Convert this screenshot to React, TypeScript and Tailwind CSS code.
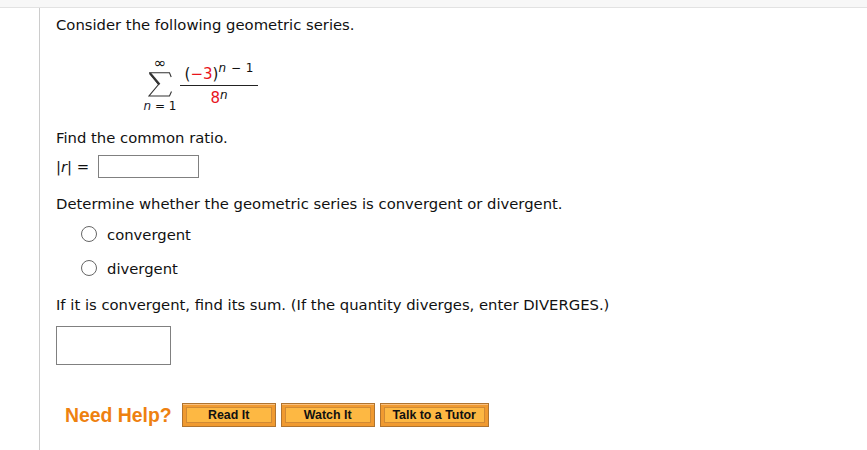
const text = "font-['DejaVu_Sans',Verdana,sans-serif] text-[14.8px] leading-[18px] text-[#111]"

function HelpButton({ label, width }: { label: string; width: string }) {
  return (
    <button className={`${width} h-6 border border-[#b0742f] bg-[#f09a30] p-[3px] shadow-[inset_0_1px_0_#f8c080]`}>
      <span className="flex h-full items-center justify-center border border-[#d08a35] bg-[#fdb843] font-['Liberation_Sans',Arial,sans-serif] text-[12.4px] font-bold text-[#111]">
        {label}
      </span>
    </button>
  )
}

function RadioRow({ label }: { label: string }) {
  return (
    <div className="flex h-[34px] items-center pl-[25px]">
      <span className="mb-[2px] h-4 w-4 rounded-full border border-[#666] bg-white" />
      <span className="ml-[10px]">{label}</span>
    </div>
  )
}

export default function App() {
  return (
    <div className="h-[450px] w-[867px] overflow-hidden bg-white">
      <div className="h-2 border-b border-[#e2e2e2] bg-[#f7f7f7]" />
      <div className="flex h-[442px]">
        <div className="w-10 shrink-0 border-r border-[#ccc]" />
        <div className={`flex-1 pl-4 ${text}`}>
          <p className="mt-2">Consider the following geometric series.</p>

          <div className="mt-[26px] ml-[88px] flex h-[66px] items-start">
            <div className="flex w-[32px] flex-col items-center text-[12px] leading-[12px]">
              <span className="h-[9px] text-[15px] leading-[6px]">∞</span>
              <svg width="24" height="25" viewBox="0 0 24 25" className="mt-[3px]" fill="none">
                <path d="M1 .8H21.5L23.2 5M1.5 1L10.5 12.5L1 24H21.5L23.5 19.5" stroke="#333" strokeWidth="1.1" />
                <path d="M2 1.2L11.5 12.5" stroke="#333" strokeWidth="2.2" />
              </svg>
              <span className="mt-[3px] whitespace-nowrap">
                <i className="text-[#223]">n</i> = 1
              </span>
            </div>
            <div className="ml-[4px] mt-[3px] flex w-[78px] flex-col items-center">
              <div className="flex h-[22px] items-center text-[15px] leading-[16px] whitespace-nowrap">
                <span>(</span>
                <span className="text-[#e8141c]">−3</span>
                <span>)</span>
                <span className="relative -top-[6px] text-[12px] [word-spacing:1px]">
                  <i>n</i> − 1
                </span>
              </div>
              <div className="h-px w-full bg-[#222]" />
              <div className="mt-[4px] flex text-[15px] leading-[16px]">
                <span className="text-[#e8141c]">8</span>
                <i className="relative -top-[3px] text-[12px]">n</i>
              </div>
            </div>
          </div>

          <p className="mt-[3px]">Find the common ratio.</p>

          <div className="mt-[8px] flex items-center">
            <span>
              |<i>r</i>| =
            </span>
            <span className="ml-[9px] h-[23px] w-[101px] border border-[#808080] bg-white" />
          </div>

          <p className="mt-[17px]">Determine whether the geometric series is convergent or divergent.</p>

          <div className="mt-[5px]">
            <RadioRow label="convergent" />
            <RadioRow label="divergent" />
          </div>

          <p className="mt-[10px]">If it is convergent, find its sum. (If the quantity diverges, enter DIVERGES.)</p>

          <div className="mt-[12px] h-[39px] w-[115px] border border-[#808080] bg-white" />

          <div className="mt-[38px] ml-[9px] flex items-center">
            <span className="font-['Liberation_Sans',Arial,sans-serif] text-[19.4px] font-bold text-[#ee8110]">Need Help?</span>
            <div className="ml-[10px] flex gap-[5px]">
              <HelpButton label="Read It" width="w-[94px]" />
              <HelpButton label="Watch It" width="w-[94px]" />
              <HelpButton label="Talk to a Tutor" width="w-[109px]" />
            </div>
          </div>
        </div>
      </div>
    </div>
  )
}
